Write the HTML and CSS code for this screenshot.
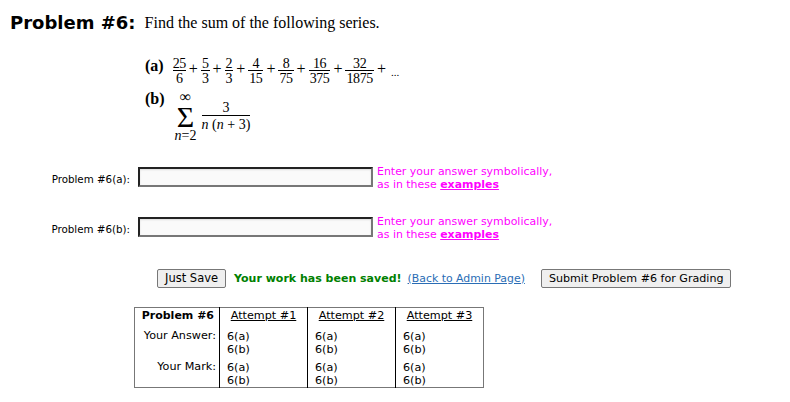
FILE: index.html
```html
<!DOCTYPE html>
<html lang="en">
<head>
<meta charset="utf-8">
<title>Problem #6</title>
<link rel="stylesheet" href="styles.css">
</head>
<body>
<div class="head">
  <h1 class="title">Problem #6:</h1>
  <p class="prompt">Find the sum of the following series.</p>
</div>
<div class="math">
  <div class="series">
    <b class="part">(a)</b>
    <span class="frac"><span class="num">25</span><span class="den">6</span></span><span class="op">+</span>
    <span class="frac"><span class="num">5</span><span class="den">3</span></span><span class="op">+</span>
    <span class="frac"><span class="num">2</span><span class="den">3</span></span><span class="op">+</span>
    <span class="frac"><span class="num">4</span><span class="den">15</span></span><span class="op">+</span>
    <span class="frac"><span class="num">8</span><span class="den">75</span></span><span class="op">+</span>
    <span class="frac"><span class="num">16</span><span class="den">375</span></span><span class="op">+</span>
    <span class="frac"><span class="num">32</span><span class="den">1875</span></span><span class="op">+</span>
    <span class="dots">...</span>
  </div>
  <div class="sum-row">
    <b class="part part-b">(b)</b>
    <span class="sigma"><span class="lim inf">∞</span><span class="sym">Σ</span><span class="lim"><i>n</i>=2</span></span>
    <span class="frac frac-b"><span class="num">3</span><span class="den"><i>n</i> (<i>n</i> + 3)</span></span>
  </div>
</div>
<div class="answer">
  <label class="label">Problem #6(a):</label>
  <input class="box" type="text">
  <div class="hint">Enter your answer symbolically,<br>as in these <a class="ex" href="#">examples</a></div>
</div>
<div class="answer">
  <label class="label">Problem #6(b):</label>
  <input class="box" type="text">
  <div class="hint">Enter your answer symbolically,<br>as in these <a class="ex" href="#">examples</a></div>
</div>
<div class="actions">
  <button class="btn save" type="button">Just Save</button>
  <b class="saved">Your work has been saved!</b>
  <a class="back" href="#">(Back to Admin Page)</a>
  <button class="btn submit" type="button">Submit Problem #6 for Grading</button>
</div>
<table class="marks">
  <colgroup><col class="c0"><col class="c1"><col class="c1"><col class="c1"></colgroup>
  <tr><th class="rowh">Problem #6</th><td class="att"><u>Attempt #1</u></td><td class="att"><u>Attempt #2</u></td><td class="att"><u>Attempt #3</u></td></tr>
  <tr><td class="rowl">Your Answer:</td><td class="v">6(a)<br>6(b)</td><td class="v">6(a)<br>6(b)</td><td class="v">6(a)<br>6(b)</td></tr>
  <tr class="last"><td class="rowl">Your Mark:</td><td class="v">6(a)<br>6(b)</td><td class="v">6(a)<br>6(b)</td><td class="v">6(a)<br>6(b)</td></tr>
</table>
</body>
</html>
```
FILE: styles.css
```css
html, body { margin: 0; padding: 0; background: #fff; color: #000; }
body { width: 790px; height: 402px; overflow: hidden; font-family: "DejaVu Sans", sans-serif; font-size: 11px; }
.head { display: flex; align-items: flex-start; padding: 12px 0 0 10px; }
.title { margin: 0; font-size: 18px; line-height: 22px; font-weight: 700; }
.prompt { margin: 0 0 0 9px; font: 16px/22px "Liberation Serif", serif; }
.math { margin: 23px 0 21px 145px; font-family: "Liberation Serif", serif; font-size: 14px; }
.series { display: flex; align-items: center; height: 28px; font-size: 14px; letter-spacing: -0.4px; }
.part { font-size: 16px; letter-spacing: 0; margin: 0 9px 10px 0; }
.frac { display: inline-flex; flex-direction: column; align-items: center; line-height: 13px; }
.num { border-bottom: 1px solid #000; align-self: stretch; text-align: center; min-width: 8px; }
.den { line-height: 15px; padding: 0 1px; }
.op { font-size: 16px; letter-spacing: 0; margin: 0 3px 5px; }
.dots { font-size: 11px; margin: 2px 0 0 2px; letter-spacing: 0; }
.sum-row { display: flex; align-items: flex-start; margin-top: 5px; }
.part-b { margin: 0 10px 0 0; line-height: 18px; }
.sigma { display: flex; flex-direction: column; align-items: center; line-height: 14px; width: 22px; }
.inf { font-size: 16px; }
.sym { font-size: 30px; line-height: 25px; }
.frac-b { margin: 11px 0 0 5px; }
.frac-b .num { line-height: 14px; }
.frac-b .den { line-height: 18px; padding: 0; }
.answer { display: flex; align-items: center; height: 25px; margin-bottom: 25px; }
.label { width: 130px; text-align: right; font-size: 10.3px; margin-right: 8px; padding-top: 4px; }
.box { box-sizing: border-box; width: 235px; height: 20px; margin: 0 4px 0 0; padding: 0; border: 2px solid; border-color: #222 #777 #777 #222; background: #fafafa; box-shadow: inset 0 1px 2px #ddd; }
.hint { color: #f0f; font-size: 10.95px; line-height: 13px; padding-top: 2px; }
.ex { color: #f0f; font-weight: 700; }
.actions { display: flex; align-items: center; padding-left: 157px; margin-top: 28px; height: 22px; }
.btn { font: 11.1px "DejaVu Sans", sans-serif; height: 19px; padding: 0 7px; background: #efefef; color: #000; border: 1px solid #777; border-radius: 2px; }
.save { font-size: 11.5px; }
.saved { color: #008000; margin-left: 8px; }
.back { color: #2a6db5; margin-left: 6px; font-size: 10.9px; }
.submit { margin-left: 16px; }
.marks { border-collapse: collapse; border: 1px solid #777; margin: 18px 0 0 134px; font-size: 11.2px; line-height: 13px; table-layout: fixed; width: 348px; }
.c0 { width: 85px; }
.c1 { width: 88px; }
.marks th, .marks td { padding: 1px 3px 4px; }
.marks td + td, .marks th + td { border-left: 1px solid #000; }
.marks .rowh { text-align: right; white-space: nowrap; font-size: 11px; padding-right: 5px; }
.att { text-align: center; }
.marks .rowl { text-align: right; vertical-align: top; padding: 3px 3px 0; white-space: nowrap; }
.marks .v { vertical-align: top; padding: 4px 3px 1px 7px; }
.marks .last .v { padding-bottom: 0; }
```
